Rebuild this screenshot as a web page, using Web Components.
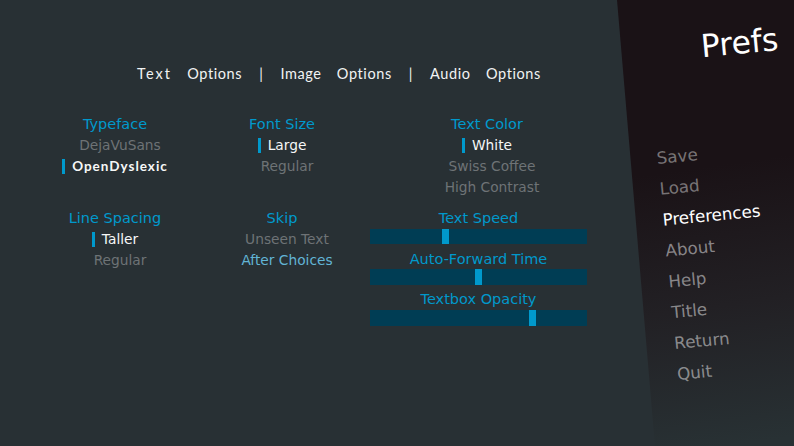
<!DOCTYPE html>
<html><head><meta charset="utf-8">
<style>
html,body{margin:0;padding:0;height:100%}
body{width:794px;height:446px;overflow:hidden;background:#283034;font-family:"DejaVu Sans",sans-serif;font-size:14.5px;display:flex}
</style></head><body>
<prefs-main>
  <tab-bar slot="tabs"></tab-bar>
  <opt-group slot="a" label="Typeface"><opt-item>DejaVuSans</opt-item><opt-item selected dys>OpenDyslexic</opt-item></opt-group>
  <opt-group slot="b" label="Font Size"><opt-item selected>Large</opt-item><opt-item>Regular</opt-item></opt-group>
  <opt-group slot="c" label="Text Color"><opt-item selected>White</opt-item><opt-item>Swiss Coffee</opt-item><opt-item>High Contrast</opt-item></opt-group>
  <opt-group slot="d" label="Line Spacing"><opt-item selected>Taller</opt-item><opt-item>Regular</opt-item></opt-group>
  <opt-group slot="e" label="Skip"><opt-item>Unseen Text</opt-item><opt-item hover>After Choices</opt-item></opt-group>
  <div slot="f" style="display:flex;flex-direction:column">
    <opt-slider label="Text Speed" value="72"></opt-slider>
    <opt-slider label="Auto-Forward Time" value="105"></opt-slider>
    <opt-slider label="Textbox Opacity" value="159"></opt-slider>
  </div>
</prefs-main>
<side-nav title-text="Prefs">
  <nav-item>Save</nav-item><nav-item>Load</nav-item><nav-item active>Preferences</nav-item><nav-item>About</nav-item><nav-item>Help</nav-item><nav-item>Title</nav-item><nav-item>Return</nav-item><nav-item>Quit</nav-item>
</side-nav>
<script>
function def(name,html,init){
  customElements.define(name,class extends HTMLElement{
    constructor(){super();this.attachShadow({mode:'open'}).innerHTML=html;}
    connectedCallback(){if(init)init(this,this.shadowRoot);}
  });
}
def('prefs-main',`<style>
:host{display:block;width:617px;flex:none;box-sizing:border-box;padding-top:63px}
.tabs{height:51px}
.row{display:grid;grid-template-columns:230px 104px 283px;}
.r1{height:94px;grid-template-columns:230px 104px 306px;width:640px}
.shift{margin-left:36px;width:217px}
</style>
<div class="tabs"><slot name="tabs"></slot></div>
<div class="row r1"><slot name="a"></slot><slot name="b"></slot><slot name="c"></slot></div>
<div class="row"><slot name="d"></slot><slot name="e"></slot><div class="shift"><slot name="f"></slot></div></div>`);
def('tab-bar',`<style>
:host{display:flex;justify-content:center;gap:17px;color:#f1f3f3;font-family:"Lato",sans-serif;font-size:14.5px;letter-spacing:.6px;word-spacing:11px;line-height:22px;width:678px}
b{font-weight:400;letter-spacing:2px}
</style><span><b>Text</b> Options</span><span>|</span><span>Image Options</span><span>|</span><span>Audio Options</span>`);
def('opt-group',`<style>
:host{display:flex;flex-direction:column;align-items:center}
.l{color:#0099cc;white-space:nowrap;line-height:21px}
</style><div class="l"></div><slot></slot>`,(h,s)=>{s.querySelector('.l').textContent=h.getAttribute('label')});
def('opt-item',`<style>
:host{display:block;position:relative;box-sizing:border-box;padding-left:10px;color:#6e7376;white-space:nowrap;line-height:21px;font-size:13.75px}
:host([selected]){color:#f6f7f7}
:host([hover]){color:#62b5d6}
:host([dys]){font-family:"Lato",sans-serif;font-size:13.5px;letter-spacing:1px;font-weight:700}
:host([selected])::before{content:"";position:absolute;left:0;top:3px;width:3px;height:15px;background:#0099cc}
</style><slot></slot>`);
def('opt-slider',`<style>
:host{display:block;height:40.7px;box-sizing:border-box}
.l{color:#0099cc;text-align:center;line-height:20.7px;white-space:nowrap}
.t{height:15.5px;background:#003d54;margin-top:0}
.k{display:block;width:6.5px;height:100%;background:#0099cc}
</style><div class="l"></div><div class="t"><span class="k"></span></div>`,(h,s)=>{
  s.querySelector('.l').textContent=h.getAttribute('label');
  s.querySelector('.k').style.marginLeft=h.getAttribute('value')+'px';
});
def('side-nav',`<style>
:host{display:block;position:relative;flex:none;width:177px;height:446px}
.bg{position:absolute;inset:0;clip-path:polygon(0 0,100% 0,100% 100%,38px 100%);background:linear-gradient(172deg,#1a1216 0%,#1a1216 38%,#222024 68%,#283134 98%)}
.c{position:relative;transform:rotate(-5.4deg);transform-origin:50px 160px;padding:28px 0 0 40px}
h1{margin:0 5px 0 0;font:400 31.5px/44px "DejaVu Sans",sans-serif;color:#fff;text-align:right}
.m{display:flex;flex-direction:column;gap:0;margin-top:70px}
</style><div class="bg"></div><div class="c"><h1></h1><div class="m"><slot></slot></div></div>`,(h,s)=>{s.querySelector('h1').textContent=h.getAttribute('title-text')});
def('nav-item',`<style>
:host{display:block;font-size:16.7px;line-height:31px;color:rgba(255,255,255,.42);white-space:nowrap}
:host(:nth-child(n+4)){color:rgba(255,255,255,.48)}
:host([active]){color:#fff}
</style><slot></slot>`);
</script>
</body></html>
